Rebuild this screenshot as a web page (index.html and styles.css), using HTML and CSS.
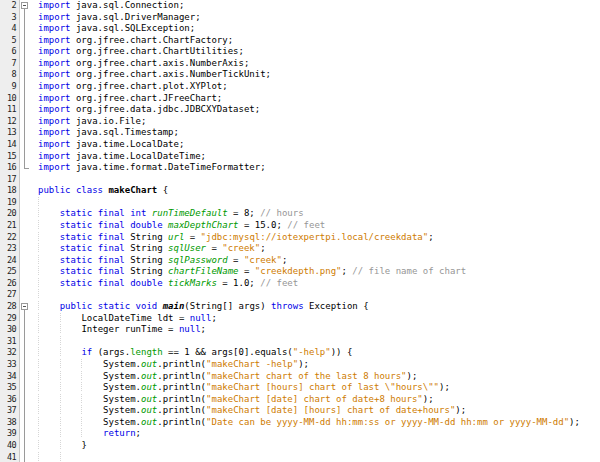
FILE: index.html
```html
<!DOCTYPE html>
<html>
<head>
<meta charset="utf-8">
<link rel="stylesheet" href="styles.css">
</head>
<body>
<div class="editor">
<div class="line"><span class="num">2</span><span class="fold"><span class="box"></span></span><span class="code"><span class="k">import</span> java.sql.Connection;</span></div>
<div class="line"><span class="num">3</span><span class="fold v"></span><span class="code"><span class="k">import</span> java.sql.DriverManager;</span></div>
<div class="line"><span class="num">4</span><span class="fold v"></span><span class="code"><span class="k">import</span> java.sql.SQLException;</span></div>
<div class="line"><span class="num">5</span><span class="fold v"></span><span class="code"><span class="k">import</span> org.jfree.chart.ChartFactory;</span></div>
<div class="line"><span class="num">6</span><span class="fold v"></span><span class="code"><span class="k">import</span> org.jfree.chart.ChartUtilities;</span></div>
<div class="line"><span class="num">7</span><span class="fold v"></span><span class="code"><span class="k">import</span> org.jfree.chart.axis.NumberAxis;</span></div>
<div class="line"><span class="num">8</span><span class="fold v"></span><span class="code"><span class="k">import</span> org.jfree.chart.axis.NumberTickUnit;</span></div>
<div class="line"><span class="num">9</span><span class="fold v"></span><span class="code"><span class="k">import</span> org.jfree.chart.plot.XYPlot;</span></div>
<div class="line"><span class="num">10</span><span class="fold v"></span><span class="code"><span class="k">import</span> org.jfree.chart.JFreeChart;</span></div>
<div class="line"><span class="num">11</span><span class="fold v"></span><span class="code"><span class="k">import</span> org.jfree.data.jdbc.JDBCXYDataset;</span></div>
<div class="line"><span class="num">12</span><span class="fold v"></span><span class="code"><span class="k">import</span> java.io.File;</span></div>
<div class="line"><span class="num">13</span><span class="fold v"></span><span class="code"><span class="k">import</span> java.sql.Timestamp;</span></div>
<div class="line"><span class="num">14</span><span class="fold v"></span><span class="code"><span class="k">import</span> java.time.LocalDate;</span></div>
<div class="line"><span class="num">15</span><span class="fold v"></span><span class="code"><span class="k">import</span> java.time.LocalDateTime;</span></div>
<div class="line"><span class="num">16</span><span class="fold end"></span><span class="code"><span class="k">import</span> java.time.format.DateTimeFormatter;</span></div>
<div class="line"><span class="num">17</span><span class="fold"></span><span class="code"></span></div>
<div class="line"><span class="num">18</span><span class="fold"></span><span class="code"><span class="k">public</span> <span class="k">class</span> <span class="b">makeChart</span> {</span></div>
<div class="line"><span class="num">19</span><span class="fold"></span><span class="code"><span class="g">    </span></span></div>
<div class="line"><span class="num">20</span><span class="fold"></span><span class="code"><span class="g">    </span><span class="k">static</span> <span class="k">final</span> <span class="k">int</span> <span class="f">runTimeDefault</span> = 8; <span class="c">// hours</span></span></div>
<div class="line"><span class="num">21</span><span class="fold"></span><span class="code"><span class="g">    </span><span class="k">static</span> <span class="k">final</span> <span class="k">double</span> <span class="f">maxDepthChart</span> = 15.0; <span class="c">// feet</span></span></div>
<div class="line"><span class="num">22</span><span class="fold"></span><span class="code"><span class="g">    </span><span class="k">static</span> <span class="k">final</span> String <span class="f">url</span> = <span class="s">"jdbc:mysql://iotexpertpi.local/creekdata"</span>;</span></div>
<div class="line"><span class="num">23</span><span class="fold"></span><span class="code"><span class="g">    </span><span class="k">static</span> <span class="k">final</span> String <span class="f">sqlUser</span> = <span class="s">"creek"</span>;</span></div>
<div class="line"><span class="num">24</span><span class="fold"></span><span class="code"><span class="g">    </span><span class="k">static</span> <span class="k">final</span> String <span class="f">sqlPassword</span> = <span class="s">"creek"</span>;</span></div>
<div class="line"><span class="num">25</span><span class="fold"></span><span class="code"><span class="g">    </span><span class="k">static</span> <span class="k">final</span> String <span class="f">chartFileName</span> = <span class="s">"creekdepth.png"</span>; <span class="c">// file name of chart</span></span></div>
<div class="line"><span class="num">26</span><span class="fold"></span><span class="code"><span class="g">    </span><span class="k">static</span> <span class="k">final</span> <span class="k">double</span> <span class="f">tickMarks</span> = 1.0; <span class="c">// feet</span></span></div>
<div class="line"><span class="num">27</span><span class="fold"></span><span class="code"><span class="g">    </span></span></div>
<div class="line"><span class="num">28</span><span class="fold"><span class="box"></span></span><span class="code"><span class="g">    </span><span class="k">public</span> <span class="k">static</span> <span class="k">void</span> <span class="bi">main</span>(String[] args) <span class="k">throws</span> Exception {</span></div>
<div class="line"><span class="num">29</span><span class="fold v"></span><span class="code"><span class="g">    </span><span class="g">    </span>LocalDateTime ldt = <span class="k">null</span>;</span></div>
<div class="line"><span class="num">30</span><span class="fold v"></span><span class="code"><span class="g">    </span><span class="g">    </span>Integer runTime = <span class="k">null</span>;</span></div>
<div class="line"><span class="num">31</span><span class="fold v"></span><span class="code"><span class="g">    </span><span class="g">    </span></span></div>
<div class="line"><span class="num">32</span><span class="fold v"></span><span class="code"><span class="g">    </span><span class="g">    </span><span class="k">if</span> (args.<span class="fl">length</span> == 1 &amp;&amp; args[0].equals(<span class="s">"-help"</span>)) {</span></div>
<div class="line"><span class="num">33</span><span class="fold v"></span><span class="code"><span class="g">    </span><span class="g">    </span><span class="g">    </span>System.<span class="f">out</span>.println(<span class="s">"makeChart -help"</span>);</span></div>
<div class="line"><span class="num">34</span><span class="fold v"></span><span class="code"><span class="g">    </span><span class="g">    </span><span class="g">    </span>System.<span class="f">out</span>.println(<span class="s">"makeChart chart of the last 8 hours"</span>);</span></div>
<div class="line"><span class="num">35</span><span class="fold v"></span><span class="code"><span class="g">    </span><span class="g">    </span><span class="g">    </span>System.<span class="f">out</span>.println(<span class="s">"makeChart [hours] chart of last \"hours\""</span>);</span></div>
<div class="line"><span class="num">36</span><span class="fold v"></span><span class="code"><span class="g">    </span><span class="g">    </span><span class="g">    </span>System.<span class="f">out</span>.println(<span class="s">"makeChart [date] chart of date+8 hours"</span>);</span></div>
<div class="line"><span class="num">37</span><span class="fold v"></span><span class="code"><span class="g">    </span><span class="g">    </span><span class="g">    </span>System.<span class="f">out</span>.println(<span class="s">"makeChart [date] [hours] chart of date+hours"</span>);</span></div>
<div class="line"><span class="num">38</span><span class="fold v"></span><span class="code"><span class="g">    </span><span class="g">    </span><span class="g">    </span>System.<span class="f">out</span>.println(<span class="s">"Date can be yyyy-MM-dd hh:mm:ss or yyyy-MM-dd hh:mm or yyyy-MM-dd"</span>);</span></div>
<div class="line"><span class="num">39</span><span class="fold v"></span><span class="code"><span class="g">    </span><span class="g">    </span><span class="g">    </span><span class="k">return</span>;</span></div>
<div class="line"><span class="num">40</span><span class="fold v"></span><span class="code"><span class="g">    </span><span class="g">    </span>}</span></div>
<div class="line"><span class="num">41</span><span class="fold v"></span><span class="code"><span class="g">    </span><span class="g">    </span></span></div>
</div>
</body>
</html>
```
FILE: styles.css
```css
html, body {
  margin: 0;
  padding: 0;
  background: #ffffff;
}
.editor {
  width: 600px;
  height: 462px;
  overflow: hidden;
  font-family: "DejaVu Sans Mono", monospace;
  font-size: 9px;
  color: #000;
}
.line {
  display: flex;
  height: 11.59px;
  line-height: 11.59px;
}
.num {
  flex: 0 0 auto;
  width: 16px;
  padding-right: 3px;
  background: #eeeeee;
  border-right: 1px solid #c9c9c9;
  text-align: right;
  font-family: "DejaVu Sans Mono", monospace;
  font-size: 8.5px;
  letter-spacing: -0.6px;
  color: #222;
}
.fold {
  flex: 0 0 18px;
  position: relative;
}
.fold.v::before {
  content: "";
  position: absolute;
  left: 4px;
  top: 0;
  bottom: 0;
  border-left: 1px solid #9a9a9a;
}
.fold.end::before {
  content: "";
  position: absolute;
  left: 4px;
  top: 0;
  height: 6px;
  width: 4px;
  border-left: 1px solid #9a9a9a;
  border-bottom: 1px solid #9a9a9a;
}
.box {
  position: absolute;
  left: 1px;
  top: 2px;
  width: 5px;
  height: 5px;
  border: 1px solid #9a9a9a;
  background: #fff;
}
.box::before {
  content: "";
  position: absolute;
  left: 1px;
  top: 2px;
  width: 3px;
  height: 1px;
  background: #555;
}
.box::after {
  content: "";
  position: absolute;
  left: 2px;
  top: 6px;
  height: 4px;
  border-left: 1px solid #9a9a9a;
}
.code {
  white-space: pre;
}
.g {
  background-image: repeating-linear-gradient(to bottom, #d6d6d6 0, #d6d6d6 1px, transparent 1px, transparent 2px);
  background-repeat: no-repeat;
  background-size: 1px 100%;
  background-position: 0 0;
}
.k { color: #0000e6; }
.s { color: #ce7b00; }
.c { color: #969696; }
.f { color: #009900; font-style: italic; }
.fl { color: #009900; }
.b { font-weight: bold; }
.bi { font-weight: bold; font-style: italic; }
```
